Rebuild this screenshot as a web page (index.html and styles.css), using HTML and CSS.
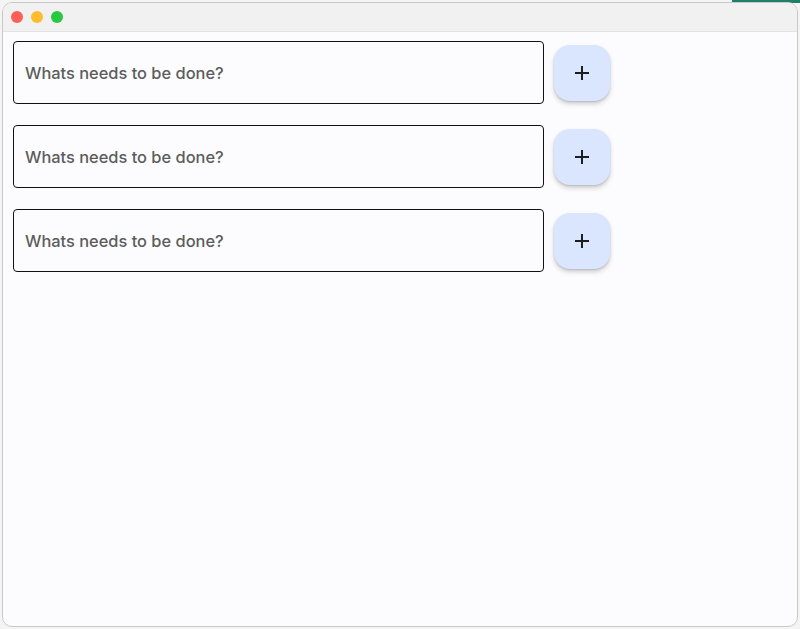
FILE: index.html
```html
<!DOCTYPE html>
<html lang="en">
<head>
  <meta charset="UTF-8">
  <title>Todo</title>
  <meta name="viewport" content="width=device-width, initial-scale=1.0">
  <link rel="stylesheet" href="styles.css">
</head>
<body>
  <div class="desktop-strip"></div>
  <div class="window">
    <div class="titlebar">
      <span class="light red"></span>
      <span class="light yellow"></span>
      <span class="light green"></span>
    </div>

    <div class="content">
      <div class="row">
        <input class="field" type="text" placeholder="Whats needs to be done?">
        <button class="add-btn" aria-label="Add">
          <svg width="16" height="16" viewBox="0 0 16 16"><path d="M8 1v14M1 8h14" stroke="#1d1d1f" stroke-width="2"/></svg>
        </button>
      </div>
      <div class="row">
        <input class="field" type="text" placeholder="Whats needs to be done?">
        <button class="add-btn" aria-label="Add">
          <svg width="16" height="16" viewBox="0 0 16 16"><path d="M8 1v14M1 8h14" stroke="#1d1d1f" stroke-width="2"/></svg>
        </button>
      </div>
      <div class="row">
        <input class="field" type="text" placeholder="Whats needs to be done?">
        <button class="add-btn" aria-label="Add">
          <svg width="16" height="16" viewBox="0 0 16 16"><path d="M8 1v14M1 8h14" stroke="#1d1d1f" stroke-width="2"/></svg>
        </button>
      </div>
    </div>
  </div>
</body>
</html>
```

FILE: styles.css
```css
html, body {
  height: 100%;
}
body {
  margin: 0;
  background: #f4f4f4;
  font-family: Inter, Roboto, sans-serif;
  position: relative;
  overflow: hidden;
}
.desktop-strip {
  position: absolute;
  top: 0;
  right: 0;
  width: 68px;
  height: 3px;
  background: #1f7f68;
}
.window {
  position: relative;
  margin: 2px 2px 0 2px;
  height: 625px;
  background: #fcfcfe;
  border: 1px solid #c9c9c9;
  border-radius: 10px;
  overflow: hidden;
  box-sizing: border-box;
}
.titlebar {
  height: 28px;
  background: #f1f1f1;
  border-bottom: 1px solid #e2e2e2;
  display: flex;
  align-items: center;
  gap: 8px;
  padding-left: 8px;
}
.light {
  width: 12px;
  height: 12px;
  border-radius: 50%;
}
.red { background: #fe5f57; }
.yellow { background: #febc2e; }
.green { background: #28c840; }
.content {
  padding: 9px 10px;
}
.row {
  display: flex;
  align-items: center;
  gap: 10px;
  margin-bottom: 21px;
}
.field {
  width: 531px;
  height: 63px;
  box-sizing: border-box;
  border: 1px solid #111;
  border-radius: 4px;
  background: transparent;
  padding: 0 11px;
  font-family: inherit;
  font-size: 16.4px;
  font-weight: 500;
  color: #333;
  outline: none;
}
.field::placeholder {
  color: #5c5c5c;
}
.add-btn {
  width: 56px;
  height: 56px;
  border: none;
  border-radius: 16px;
  background: #d9e6fd;
  box-shadow: 0 3px 5px rgba(0,0,0,0.18), 0 1px 2px rgba(0,0,0,0.12);
  display: flex;
  align-items: center;
  justify-content: center;
  cursor: pointer;
  margin-top: 1px;
}
```
